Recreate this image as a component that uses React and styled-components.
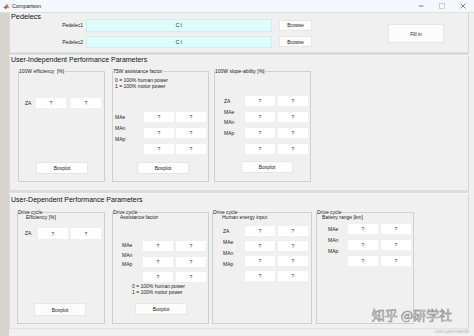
import React from 'react';
import styled, { createGlobalStyle } from 'styled-components';

const GlobalStyle = createGlobalStyle`
  html, body { margin: 0; padding: 0; }
  body {
    font-family: "Liberation Sans", Arial, sans-serif;
    background: #f0f0f0;
  }
`;

const Params = ({ labels, rows, ml, mt, lw, lh = 11, cg = 3, rg = 6, bh = 10 }) => (
  <ParamBlock $ml={ml} $mt={mt}>
    <LabelCol $w={lw} $lh={lh}>
      {labels.map((l) => (
        <span key={l}>{l}</span>
      ))}
    </LabelCol>
    <BoxGrid $cg={cg} $rg={rg} $bh={bh}>
      {Array.from({ length: rows * 2 }, (_, i) => (
        <ValueBox key={i}>?</ValueBox>
      ))}
    </BoxGrid>
  </ParamBlock>
);

const App = () => {
  return (
    <Window>
      <GlobalStyle />
      <TitleBar>
        <svg width="7" height="7" viewBox="0 0 14 14">
          <path d="M1 9 L5 6 L8 1 L10 6 L13 11 L9 9 L6 12 Z" fill="#d9622b" />
          <path d="M1 9 L5 6 L6 12 Z" fill="#3b7fc4" />
        </svg>
        <AppTitle>Comparison</AppTitle>
        <Controls>
          <CtrlCell $w={21}>
            <svg width="6" height="6" viewBox="0 0 10 10">
              <path d="M1 5 H9" stroke="#333" strokeWidth="1" />
            </svg>
          </CtrlCell>
          <CtrlCell $w={21}>
            <svg width="6" height="6" viewBox="0 0 10 10">
              <rect x="1" y="1" width="8" height="8" fill="none" stroke="#b5b5b5" strokeWidth="1" />
            </svg>
          </CtrlCell>
          <CtrlCell $w={22}>
            <svg width="6" height="6" viewBox="0 0 10 10">
              <path d="M1 1 L9 9 M9 1 L1 9" stroke="#333" strokeWidth="1" />
            </svg>
          </CtrlCell>
        </Controls>
      </TitleBar>

      <Body>
        <LeftStrip />
        <Main>
          <Panel $h={39}>
            <PedelecsRow>
              <PanelTitle $w={46} $size={7.3}>Pedelecs</PanelTitle>
              <FileRows>
                <FileRow>
                  <FileLabel>Pedelec1</FileLabel>
                  <PathField>C:\</PathField>
                  <Button $w={33} $h={10.5}>Browse</Button>
                </FileRow>
                <FileRow>
                  <FileLabel>Pedelec2</FileLabel>
                  <PathField>C:\</PathField>
                  <Button $w={33} $h={11}>Browse</Button>
                </FileRow>
              </FileRows>
              <FillButton>Fill in</FillButton>
            </PedelecsRow>
          </Panel>

          <Divider />

          <Panel $h={134}>
            <PanelTitle>User-Independent Performance Parameters</PanelTitle>
            <SubRow $ml={7} $mt={4}>
              <SubPanel $w={87}>
                <Legend>100W efficiency&nbsp; [%]</Legend>
                <Params labels={['ZA']} rows={1} ml={6} mt={24} lw={11} cg={5} />
                <Boxplot $ml={17}>Boxplot</Boxplot>
              </SubPanel>
              <SubPanel $w={97} $ml={7}>
                <Legend>75W assistance factor</Legend>
                <Caption $ml={2} $mt={4}>
                  0 = 100% human power
                  <br />1 = 100% motor power
                </Caption>
                <Params labels={['MAe', 'MAn', 'MAp']} rows={3} ml={2} mt={23} lw={29} cg={2} />
                <Boxplot $ml={24}>Boxplot</Boxplot>
              </SubPanel>
              <SubPanel $w={97} $ml={5} $pb={8}>
                <Legend>100W slope-ability [%]</Legend>
                <Params labels={['ZA', 'MAe', 'MAn', 'MAp']} rows={4} ml={9} mt={22} lw={21} lh={10.7} />
                <Boxplot $ml={26}>Boxplot</Boxplot>
              </SubPanel>
            </SubRow>
          </Panel>

          <Divider />

          <Panel $h={134}>
            <PanelTitle $mt={2}>User-Dependent Performance Parameters</PanelTitle>
            <SubRow $ml={6} $mt={5}>
              <SubPanel $w={88} $h={114.5} $pb={6.5}>
                <Legend>Drive cycle</Legend>
                <Caption $ml={8}>Efficiency [%]</Caption>
                <Params labels={['ZA']} rows={1} ml={7} mt={7.5} lw={13} bh={11} />
                <Boxplot $ml={16} $h={13}>Boxplot</Boxplot>
              </SubPanel>
              <SubPanel $w={97} $ml={7} $h={114.5} $pb={7.5}>
                <Legend>Drive cycle</Legend>
                <Caption $ml={7}>Assistance factor</Caption>
                <Params labels={['MAe', 'MAn', 'MAp']} rows={3} ml={9} mt={20.5} lw={21} lh={9.7} rg={5.5} />
                <Caption $ml={19} $mt={2}>
                  0 = 100% human power
                  <br />1 = 100% motor power
                </Caption>
                <Boxplot $ml={22}>Boxplot</Boxplot>
              </SubPanel>
              <SubPanel $w={100} $ml={3} $h={114.5}>
                <Legend>Drive cycle</Legend>
                <Caption $ml={9}>Human energy input</Caption>
                <Params labels={['ZA', 'MAe', 'MAn', 'MAp']} rows={4} ml={10} mt={5.5} lw={22} rg={5} />
              </SubPanel>
              <SubPanel $w={98} $ml={4} $h={114.5}>
                <Legend>Drive cycle</Legend>
                <Caption $ml={5}>Battery range [km]</Caption>
                <Params labels={['MAe', 'MAn', 'MAp']} rows={3} ml={11} mt={3.5} lw={20} lh={11.2} />
              </SubPanel>
            </SubRow>
          </Panel>

          <Footer />
        </Main>
      </Body>

      <Watermark>知乎 @研学社</Watermark>
      <SourceMark>CSDN @研学社研究所</SourceMark>
    </Window>
  );
};

const Window = styled.div`
  position: relative;
  width: 474px;
  height: 336px;
  overflow: hidden;
  display: flex;
  flex-direction: column;
  background: #f0f0f0;
  color: #1c1c1c;
`;

const TitleBar = styled.header`
  box-sizing: border-box;
  flex: none;
  height: 13px;
  display: flex;
  align-items: center;
  padding-left: 3px;
  background: #f4f8fc;
  border-bottom: 1px solid #e1e1e1;
`;

const AppTitle = styled.span`
  margin-left: 2px;
  font-size: 5.4px;
  color: #222;
`;

const Controls = styled.div`
  margin-left: auto;
  display: flex;
  align-items: center;
`;

const CtrlCell = styled.span`
  width: ${(p) => p.$w}px;
  display: flex;
  justify-content: center;
`;

const Body = styled.div`
  flex: 1;
  display: flex;
  min-height: 0;
`;

const LeftStrip = styled.div`
  width: 9px;
  flex: none;
  background: #d7d3ce;
`;

const Main = styled.main`
  flex: 1;
  display: flex;
  flex-direction: column;
  padding-right: 5px;
`;

const Panel = styled.section`
  box-sizing: border-box;
  flex: none;
  height: ${(p) => p.$h}px;
  padding-left: 1px;
  border-left: 1px solid #dadada;
  border-right: 1px solid #d6d6d6;
  background: #f0f0f0;
`;

const PanelTitle = styled.div`
  width: ${(p) => (p.$w ? `${p.$w}px` : 'auto')};
  flex: none;
  margin-top: ${(p) => p.$mt || 0}px;
  font-size: ${(p) => p.$size || 7}px;
  line-height: 8px;
  color: #111;
`;

const PedelecsRow = styled.div`
  display: flex;
  align-items: flex-start;
`;

const FileRows = styled.div`
  display: flex;
  flex-direction: column;
  gap: 4px;
  padding-top: 6px;
`;

const FileRow = styled.div`
  height: 12.5px;
  display: flex;
  align-items: center;
`;

const FileLabel = styled.span`
  width: 26px;
  margin-right: 3px;
  text-align: right;
  font-size: 5px;
  color: #222;
`;

const PathField = styled.div`
  box-sizing: border-box;
  width: 186px;
  height: 100%;
  display: flex;
  align-items: center;
  justify-content: center;
  background: #dffcfc;
  border: 1px solid #d2eeee;
  font-size: 5px;
  color: #222;
`;

const Button = styled.button`
  box-sizing: border-box;
  width: ${(p) => p.$w}px;
  height: ${(p) => p.$h}px;
  margin-left: 7px;
  padding: 0;
  background: #fcfcfc;
  border: 1px solid #e6e6e6;
  border-radius: 0;
  font-family: inherit;
  font-size: 5px;
  color: #222;
`;

const FillButton = styled(Button)`
  width: 56px;
  height: 19px;
  margin-left: 76px;
  margin-top: 11px;
`;

const Divider = styled.div`
  box-sizing: border-box;
  flex: none;
  height: 4px;
  background: #dcdcdc;
  border-bottom: 1px solid #f6f6f6;
`;

const Footer = styled.div`
  flex: 1;
  border-top: 1px solid #e2e2e2;
`;

const SubRow = styled.div`
  display: flex;
  align-items: flex-start;
  margin-left: ${(p) => p.$ml}px;
  margin-top: ${(p) => p.$mt}px;
`;

const SubPanel = styled.fieldset`
  box-sizing: border-box;
  width: ${(p) => p.$w}px;
  height: ${(p) => p.$h || 114}px;
  min-width: 0;
  margin: 0 0 0 ${(p) => p.$ml || 0}px;
  padding: 0 0 ${(p) => p.$pb ?? 7}px;
  display: flex;
  flex-direction: column;
  border: 1px solid #d0d0d0;
`;

const Legend = styled.legend`
  margin-left: 0;
  padding: 0 1px 0 0;
  font-size: 5px;
  line-height: 6px;
  color: #222;
`;

const Caption = styled.div`
  margin-left: ${(p) => p.$ml}px;
  margin-top: ${(p) => p.$mt || 0}px;
  font-size: 5px;
  line-height: 5.5px;
  color: #222;
`;

const ParamBlock = styled.div`
  display: flex;
  align-items: flex-start;
  margin-left: ${(p) => p.$ml}px;
  margin-top: ${(p) => p.$mt}px;
`;

const LabelCol = styled.div`
  width: ${(p) => p.$w}px;
  flex: none;
  display: flex;
  flex-direction: column;
  font-size: 5px;
  line-height: ${(p) => p.$lh}px;
  color: #222;
`;

const BoxGrid = styled.div`
  display: grid;
  grid-template-columns: 30px 30px;
  grid-auto-rows: ${(p) => p.$bh}px;
  column-gap: ${(p) => p.$cg}px;
  row-gap: ${(p) => p.$rg}px;
`;

const ValueBox = styled.div`
  display: flex;
  align-items: center;
  justify-content: center;
  background: #fff;
  font-size: 5px;
  color: #333;
`;

const Boxplot = styled(Button)`
  width: 52px;
  height: ${(p) => p.$h || 12}px;
  margin-top: auto;
  margin-left: ${(p) => p.$ml}px;
  flex: none;
`;

const Watermark = styled.div`
  position: absolute;
  right: 22px;
  top: 307px;
  font-family: "Noto Sans CJK SC", sans-serif;
  font-size: 13px;
  line-height: 16px;
  color: rgba(255, 255, 255, 0.9);
  -webkit-text-stroke: 0.6px #8c8c8c;
`;

const SourceMark = styled.div`
  position: absolute;
  right: 5px;
  bottom: 2px;
  font-family: "Noto Sans CJK SC", sans-serif;
  font-size: 3.5px;
  color: #b0b0b0;
`;

export default App;
